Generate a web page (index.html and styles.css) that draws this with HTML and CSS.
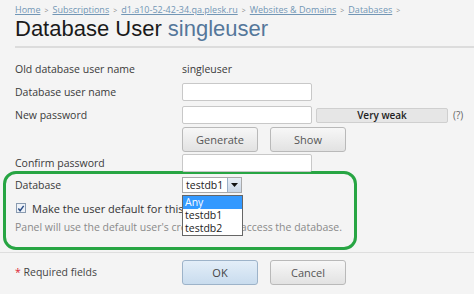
FILE: index.html
```html
<!DOCTYPE html>
<html>
<head>
<meta charset="utf-8">
<link rel="stylesheet" href="styles.css">
</head>
<body>
<div class="page">
  <div class="crumbs">
    <a href="#">Home</a><span class="sep">&gt;</span><a href="#">Subscriptions</a><span class="sep">&gt;</span><a href="#">d1.a10-52-42-34.qa.plesk.ru</a><span class="sep">&gt;</span><a href="#">Websites &amp; Domains</a><span class="sep">&gt;</span><a href="#">Databases</a><span class="sep">&gt;</span>
  </div>
  <h1 class="title">Database User <span class="hl">singleuser</span></h1>
  <div class="rule"></div>

  <div class="form">
    <div class="row row-old">
      <div class="lbl">Old database user name</div>
      <div class="val">singleuser</div>
    </div>
    <div class="row row-in">
      <div class="lbl">Database user name</div>
      <div class="txt"></div>
    </div>
    <div class="row row-pw">
      <div class="lbl">New password</div>
      <div class="txt"></div>
      <div class="meter">Very weak</div>
      <span class="help">(?)</span>
    </div>
    <div class="row row-btns">
      <div class="lbl"></div>
      <div class="btn">Generate</div>
      <div class="btn">Show</div>
    </div>
    <div class="row row-cf">
      <div class="lbl">Confirm password</div>
      <div class="txt"></div>
    </div>
  </div>

  <div class="box">
    <div class="row row-db">
      <div class="lbl">Database</div>
      <div class="select">
        <span class="sel-text">testdb1</span>
        <span class="sel-btn"><svg width="7" height="4" viewBox="0 0 7 4"><path d="M0 0H7L3.5 4Z" fill="#111"/></svg></span>
        <ul class="list">
          <li class="on">Any</li>
          <li>testdb1</li>
          <li>testdb2</li>
        </ul>
      </div>
    </div>
    <div class="check">
      <span class="cb"><svg width="9" height="9" viewBox="0 0 9 9"><path d="M1.5 4.5L3.5 7L7.5 1.5" fill="none" stroke="#2d4f86" stroke-width="1.6"/></svg></span>
      <span class="cb-text">Make the user default for this database</span>
    </div>
    <div class="hint">Panel will use the default user's credentials to access the database.</div>
  </div>

  <div class="footer">
    <div class="req"><span class="ast">*</span> Required fields</div>
    <div class="btn btn-ok">OK</div>
    <div class="btn">Cancel</div>
  </div>
</div>
</body>
</html>
```

FILE: styles.css
```css
* { box-sizing: border-box; }
html, body { margin: 0; padding: 0; }
body {
  background: #f4f4f4;
  font-family: "Open Sans", "DejaVu Sans", sans-serif;
  font-size: 10.5px;
  color: #3a3a3a;
  width: 474px;
  height: 294px;
  overflow: hidden;
}
.page { padding-top: 4px; }

.crumbs {
  padding-left: 15px;
  height: 12px;
  line-height: 12px;
  font-size: 9px;
  white-space: nowrap;
}
.crumbs a { color: #7296b5; text-decoration: underline; }
.crumbs .sep { color: #8a8a8a; margin: 0 4px; font-size: 7px; }

.title {
  margin: 0;
  padding-left: 15px;
  font-family: "Liberation Sans", Arial, sans-serif;
  font-weight: normal;
  font-size: 22px;
  line-height: 26px;
  color: #1a1a1a;
}
.title .hl { color: #54779a; }

.rule {
  margin: 4px 0 0 15px;
  height: 2px;
  background: #dcdcdc;
}

.form { padding-left: 15px; margin-top: 12px; }
.row { display: flex; align-items: center; }
.lbl { width: 167px; flex: none; }
.row-old { height: 18px; }
.row-in { height: 18px; margin-top: 5px; }
.row-pw { height: 18px; margin-top: 5px; }
.row-btns { height: 25px; margin-top: 3px; gap: 12px; }
.row-btns .lbl { margin-right: -12px; }
.row-cf { height: 18px; margin-top: 2px; }

.txt {
  width: 130px;
  height: 18px;
  background: #fff;
  border: 1px solid #c8c8c8;
  border-radius: 2px;
}
.meter {
  margin-left: 4px;
  width: 132px;
  height: 15px;
  background: #e6e6e6;
  border: 1px solid #cfcfcf;
  border-radius: 2px;
  text-align: center;
  line-height: 13px;
  font-size: 10px;
  font-weight: 600;
  color: #222;
}
.help { margin-left: 5px; color: #666; font-size: 10px; }

.btn {
  width: 76px;
  height: 25px;
  border: 1px solid #b9b9b9;
  border-radius: 3px;
  background: linear-gradient(#f7f7f7, #e2e2e2);
  display: flex;
  align-items: center;
  justify-content: center;
  color: #555;
  font-size: 11px;
}

.box {
  margin: -1px 0 0 3px;
  width: 354px;
  border: 3px solid #27a543;
  border-radius: 13px;
  padding: 3px 0 13px 9px;
}
.row-db { height: 16px; }
.select {
  position: relative;
  width: 60px;
  height: 16px;
  background: #fff;
  border: 1px solid #a9a9a9;
  display: flex;
  align-items: center;
}
.sel-text { flex: 1; padding-left: 3px; color: #222; line-height: 14px; }
.sel-btn {
  width: 14px;
  height: 14px;
  border-left: 1px solid #9ab0c8;
  background: linear-gradient(#e8eef6, #c9d6e6);
  display: flex;
  align-items: center;
  justify-content: center;
}
.list {
  position: absolute;
  top: 17px;
  left: -1px;
  width: 61px;
  margin: 0;
  padding: 0;
  list-style: none;
  background: #fff;
  border: 1px solid #666;
  z-index: 2;
}
.list li { height: 13px; line-height: 13px; padding-left: 2px; color: #222; }
.list li.on { background: #3399ff; color: #fff; }

.check { display: flex; align-items: center; height: 14px; margin-top: 8px; }
.cb {
  width: 10px; height: 10px;
  border: 1px solid #8a9bb0;
  background: #eef2f8;
  display: flex; align-items: center; justify-content: center;
  margin: 0 6px 0 1px;
}
.cb-text { font-size: 11px; color: #333; white-space: nowrap; }
.hint { height: 14px; line-height: 14px; margin-top: 5px; color: #8a8a8a; white-space: nowrap; }

.footer {
  margin-top: 2px;
  border-top: 1px solid #dedede;
  padding: 7px 0 0 15px;
  display: flex;
  gap: 12px;
  height: 42px;
  align-items: flex-start;
}
.req { width: 167px; margin-right: -12px; line-height: 25px; color: #444; }
.ast { color: #d23; }
.btn-ok {
  background: linear-gradient(#e3eef8, #c9dcee);
  border-color: #9db3c9;
  color: #444;
}
```
